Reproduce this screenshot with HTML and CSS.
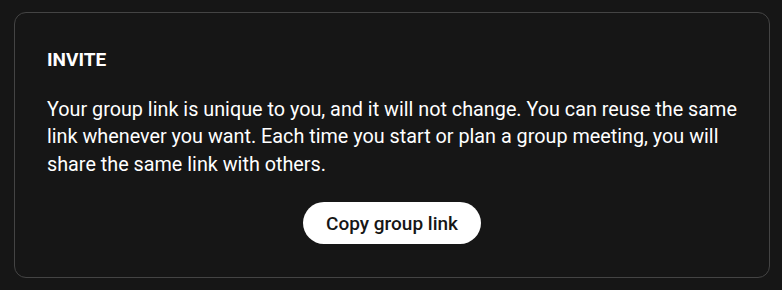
FILE: index.html
```html
<!DOCTYPE html>
<html>
<head>
<meta charset="utf-8">
<link rel="stylesheet" href="styles.css">
</head>
<body>
<div class="card">
  <h2 class="title">INVITE</h2>
  <p class="text">Your group link is unique to you, and it will not change. You can reuse the same link whenever you want. Each time you start or plan a group meeting, you will share the same link with others.</p>
  <div class="actions"><button class="btn">Copy group link</button></div>
</div>
</body>
</html>
```
FILE: styles.css
```css
html, body { margin: 0; padding: 0; background: #161616; }
body { padding: 12px 12px 12px 14px; font-family: Roboto, "Liberation Sans", sans-serif; color: #fff; }
.card {
  width: 756px;
  box-sizing: border-box;
  height: 266px;
  border: 1px solid #444;
  border-radius: 12px;
  padding: 33px 26px 0 32px;
}
.title { margin: 0; font-size: 19px; font-weight: 700; line-height: 27px; }
.text { margin: 22.5px 0 0 0; font-size: 19.8px; line-height: 27.7px; font-weight: 400; }
.actions { display: flex; justify-content: center; margin-top: 23.5px; padding-right: 6px; }
.btn {
  background: #fff; color: #161616; border: none; border-radius: 21px;
  height: 42px; padding: 0 23px; font-family: Roboto, "Liberation Sans", sans-serif;
  font-size: 19px; font-weight: 500;
}
```
